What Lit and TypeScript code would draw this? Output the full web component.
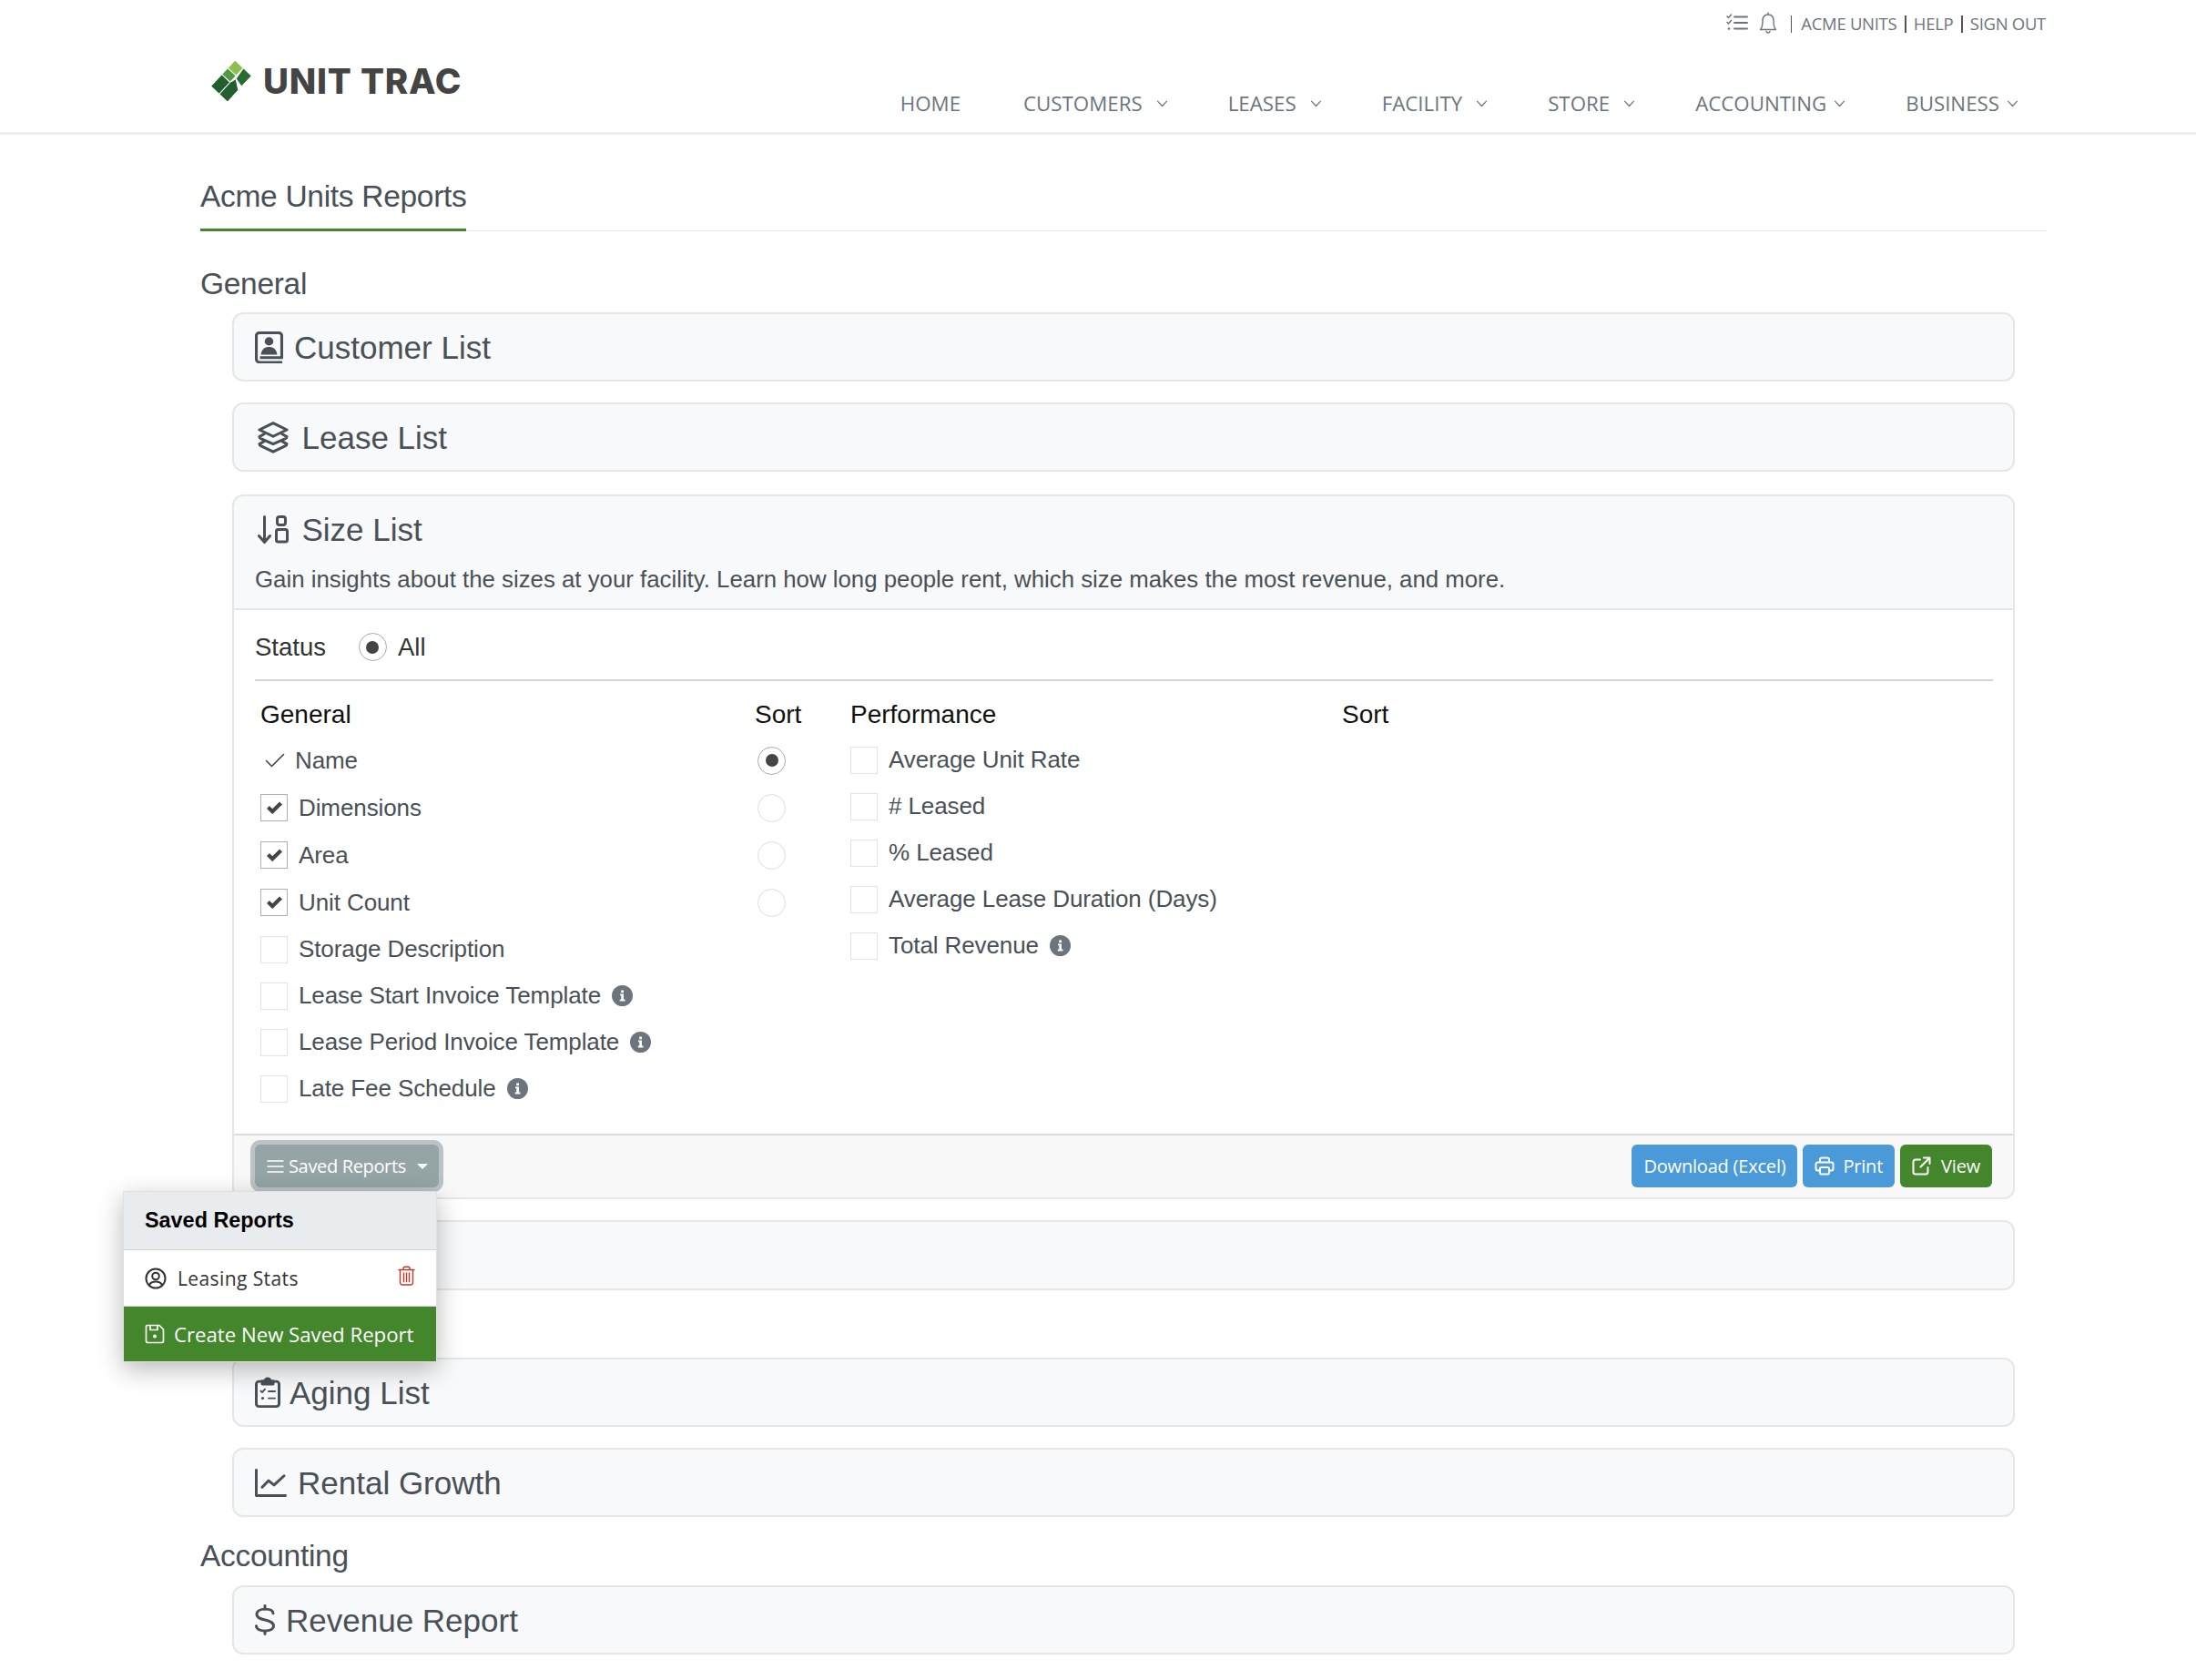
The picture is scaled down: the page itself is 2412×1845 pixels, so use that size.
import { LitElement, html, svg, css } from 'lit';
import { customElement } from 'lit/decorators.js';

const stroke = (w: number, h: number, vb: string, body: unknown, sw = 1.5) => html`<svg
    width=${w} height=${h} viewBox=${vb} fill="none" stroke="currentColor" stroke-width=${sw}
    stroke-linecap="round" stroke-linejoin="round">${body}</svg>`;

const icons = {
    customer: html`<svg width="31" height="35" viewBox="0 0 31 37" preserveAspectRatio="none" fill="none" stroke="currentColor" stroke-width="3.2" stroke-linejoin="round">
        <path d="M30 36H5.5A4 4 0 0 1 1.5 32V5A3.5 3.5 0 0 1 5 1.5H26A3.5 3.5 0 0 1 29.5 5V30.5H5.5"/>
        <circle cx="15.5" cy="11.5" r="4.8" fill="currentColor" stroke="none"/>
        <path d="M6.5 27C7.5 20 11 18 15.5 18S23.5 20 24.5 27Z" fill="currentColor" stroke="none"/></svg>`,
    layers: html`<svg width="34" height="35" viewBox="0 0 34 37" preserveAspectRatio="none" fill="none" stroke="currentColor" stroke-width="3.2" stroke-linejoin="round" stroke-linecap="round">
        <path d="M17 1.8L32 9.5L17 17.2L2 9.5Z"/>
        <path d="M7 14.5L2 17.5C2 19 3 19.5 4 20L17 26L30 20C31 19.5 32 19 32 17.5L27 14.5"/>
        <path d="M7 23L2 26C2 27.5 3 28 4 28.5L17 35L30 28.5C31 28 32 27.5 32 26L27 23"/></svg>`,
    sort: html`<svg width="34" height="31" viewBox="0 0 34 31" fill="none" stroke="currentColor" stroke-width="3" stroke-linejoin="round" stroke-linecap="round">
        <path d="M7.5 1.5V29M1.5 22.5L7.5 29.5L13.5 22.5"/>
        <rect x="21.5" y="1.5" width="9" height="9" rx="2.5"/>
        <rect x="20.5" y="15.5" width="12" height="13.5" rx="2"/></svg>`,
    clipboard: html`<svg class="clip" width="28" height="34" viewBox="0 0 28 36" preserveAspectRatio="none" fill="none" stroke="currentColor" stroke-width="3" stroke-linejoin="round" stroke-linecap="round">
        <path d="M8 5.5H4.5A3 3 0 0 0 1.5 8.5V31.5A3 3 0 0 0 4.5 34.5H23.5A3 3 0 0 0 26.5 31.5V8.5A3 3 0 0 0 23.5 5.5H20"/>
        <path d="M8 8.5V5H11A3 3 0 0 1 17 5H20V8.5Z" fill="currentColor"/>
        <path d="M6.5 16.5L8 18L11 14.5M15 17H22M15 25H22" stroke-width="2"/>
        <circle cx="8.5" cy="25" r="1.6" fill="currentColor" stroke="none"/></svg>`,
    graph: html`<svg width="35" height="31" viewBox="0 0 35 32" preserveAspectRatio="none" fill="none" stroke="currentColor" stroke-width="3" stroke-linejoin="round" stroke-linecap="round">
        <path d="M1.5 1.5V30.5H33.5"/><path d="M8 21L15 13.5L21 18.5L32 8"/></svg>`,
    dollar: html`<svg width="22" height="34" viewBox="0 0 22 36" preserveAspectRatio="none" fill="none" stroke="currentColor" stroke-width="3" stroke-linecap="round" stroke-linejoin="round">
        <path d="M20 10.5C20 7 16 5.5 11 5.5C6 5.5 2 7.5 2 11.5C2 15.5 6 16.8 11 18C16 19.2 20.5 20.5 20.5 25C20.5 29 16 30.8 11 30.8C6 30.8 1.5 29 1.5 25"/>
        <path d="M11 1.5V5.5M11 30.8V34.5"/></svg>`,
    listCheck: stroke(24, 20, '0 0 24 20', svg`<path d="M9 3.5H23M9 10H23M9 16.5H23" stroke-width="2"/><path d="M1 3L2.5 4.5L5.5 1M1 9.5L2.5 11L5.5 7.5" stroke-width="1.5"/><circle cx="3" cy="16.5" r="1.3" fill="currentColor" stroke="none"/>`),
    bell: stroke(20, 25, '0 0 20 25', svg`<path d="M10 1V3M10 3C5.5 3 4 6.5 4 10C4 15 3.5 17.5 1.5 19.5H18.5C16.5 17.5 16 15 16 10C16 6.5 14.5 3 10 3ZM8 21.5C8.5 23.5 11.5 23.5 12 21.5" stroke-width="1.4"/>`),
    chevron: stroke(13, 8, '0 0 13 8', svg`<path d="M1.5 1.2L6.5 6.5L11.5 1.2" stroke-width="1.2"/>`),
    list: stroke(19, 16, '0 0 19 16', svg`<path d="M1 2H18M1 8H18M1 14H18" stroke-width="1.5"/>`),
    printer: stroke(22, 21, '0 0 22 21', svg`<path d="M6 6.5V3.5A2 2 0 0 1 8 1.5H14A2 2 0 0 1 16 3.5V6.5M6 15.5H3.5A2 2 0 0 1 1.5 13.5V8.5A2 2 0 0 1 3.5 6.5H18.5A2 2 0 0 1 20.5 8.5V13.5A2 2 0 0 1 18.5 15.5H16"/><rect x="6" y="12" width="10" height="7.5" rx="1.5"/>`, 2),
    external: stroke(21, 21, '0 0 21 21', svg`<path d="M9 3.5H4A2.5 2.5 0 0 0 1.5 6V17A2.5 2.5 0 0 0 4 19.5H15A2.5 2.5 0 0 0 17.5 17V12"/><path d="M9.5 11.5L19 2M13 1.5H19.5V8"/>`, 2),
    person: stroke(24, 24, '0 0 24 24', svg`<circle cx="12" cy="12" r="10.5"/><circle cx="12" cy="9.5" r="3.8"/><path d="M5 19C6.5 16 9 15.5 12 15.5S17.5 16 19 19"/>`, 2),
    trash: stroke(19, 22, '0 0 19 22', svg`<path d="M1 4.5H18M6 4.5V3A1.8 1.8 0 0 1 7.8 1.2H11.2A1.8 1.8 0 0 1 13 3V4.5M2.5 4.5V18.5A2.5 2.5 0 0 0 5 21H14A2.5 2.5 0 0 0 16.5 18.5V4.5M6.5 8V17.5M9.5 8V17.5M12.5 8V17.5" stroke-width="1.4"/>`),
    save: stroke(22, 22, '0 0 22 22', svg`<path d="M3 1.5H16L20.5 6V18.5A2 2 0 0 1 18.5 20.5H3.5A2 2 0 0 1 1.5 18.5V3A1.5 1.5 0 0 1 3 1.5Z"/><path d="M6 1.5V6.5H14V1.5"/><circle cx="11" cy="13.5" r="2" fill="currentColor" stroke="none"/>`, 1.7),
    check: html`<svg width="17" height="14" viewBox="0 0 17 14" fill="none" stroke="currentColor" stroke-width="4.2"><path d="M1.5 6.5L6.2 11.2L15.5 2"/></svg>`,
    thinCheck: stroke(22, 16, '0 0 22 16', svg`<path d="M1.5 8.5L7.5 14.5L20.5 1.5" stroke-width="1.6"/>`),
    info: html`<svg class="info" width="23" height="23" viewBox="0 0 23 23"><circle cx="11.5" cy="11.5" r="11.5" fill="#6c757d"/><path d="M9 9.5H13V15.5H14.5V17.5H8.8V15.5H10.3V11.3H9ZM10.2 5.5H13V8.2H10.2Z" fill="#fff"/></svg>`
};

const navItems = [
    { label: 'HOME', caret: false, tight: false },
    { label: 'CUSTOMERS', caret: true, tight: false },
    { label: 'LEASES', caret: true, tight: false },
    { label: 'FACILITY', caret: true, tight: false },
    { label: 'STORE', caret: true, tight: false },
    { label: 'ACCOUNTING', caret: true, tight: true },
    { label: 'BUSINESS', caret: true, tight: true }
];

const generalRows = [
    { label: 'Dimensions', checked: true, info: false },
    { label: 'Area', checked: true, info: false },
    { label: 'Unit Count', checked: true, info: false }
];

const moreRows = [
    { label: 'Storage Description', info: false },
    { label: 'Lease Start Invoice Template', info: true },
    { label: 'Lease Period Invoice Template', info: true },
    { label: 'Late Fee Schedule', info: true }
];

const perfRows = [
    { label: 'Average Unit Rate', info: false },
    { label: '# Leased', info: false },
    { label: '% Leased', info: false },
    { label: 'Average Lease Duration (Days)', info: false },
    { label: 'Total Revenue', info: true }
];

@customElement('app-root')
export class AppRoot extends LitElement {
    static styles = css`
        :host {
            display: block;
            font-family: "Liberation Sans", Arial, sans-serif;
            color: #495057;
            background: #fff;
            min-height: 1845px;
            overflow: hidden;
        }
        header {
            height: 145px;
            border-bottom: 3px solid #eee;
            position: relative;
            font-family: "Open Sans", sans-serif;
            color: #6c757d;
        }
        .top-links {
            display: flex;
            justify-content: flex-end;
            align-items: center;
            height: 50px;
            padding-right: 165px;
            font-size: 18.5px;
            letter-spacing: -0.3px;
            color: #6c757d;
        }
        .top-links svg { margin-right: 12px; }
        .top-links span + span::before {
            content: '';
            display: inline-block;
            width: 1.5px;
            height: 19px;
            background: #555;
            margin: 0 8px 0 9px;
            vertical-align: -3px;
        }
        .top-links .first::before {
            content: '';
            display: inline-block;
            width: 1.5px;
            height: 19px;
            background: #555;
            margin: 0 10px 0 3px;
            vertical-align: -3px;
        }
        .logo {
            position: absolute;
            left: 231px;
            top: 66px;
            display: flex;
            align-items: center;
            gap: 12px;
            font-family: Inter, sans-serif;
            font-weight: 800;
            font-size: 38.5px;
            letter-spacing: 0.8px;
            color: #444;
        }
        nav {
            display: flex;
            justify-content: flex-end;
            gap: 66px;
            padding-right: 195px;
            margin-top: 49px;
            font-size: 22.3px;
            line-height: 30px;
        }
        nav a { display: flex; align-items: center; }
        nav a svg { margin-left: 15px; }
        nav a.tight svg { margin-left: 8px; }
        nav a:first-child { margin-right: 3px; }
        main { padding: 0 164px 0 220px; }
        .tabs {
            margin-top: 23px;
            height: 83px;
            border-bottom: 1px solid #e8e8e8;
            box-sizing: border-box;
        }
        .tabs .tab {
            display: inline-block;
            height: 83px;
            box-sizing: border-box;
            padding-top: 25px;
            border-bottom: 3px solid #43862b;
            font-size: 33.5px;
            line-height: 40px;
            letter-spacing: -0.3px;
        }
        .section-title {
            font-size: 33.5px;
            line-height: 38px;
            height: 51px;
            letter-spacing: -0.3px;
        }
        .section-title.first { margin-top: 39px; height: 50px; }
        .section-title.later { margin-top: 24px; }
        .section-title.hidden { height: 50px; }
        .cards { margin: 0 35px; }
        .card {
            border: 2px solid #e6e6e6;
            border-radius: 12px;
            background: #f8f9fa;
            margin-bottom: 23px;
        }
        .cards > .card:last-child { margin-bottom: 0; }
        .card.size { margin-top: 25px; }
        .card-title {
            display: flex;
            align-items: center;
            height: 72px;
            padding-left: 23px;
            font-size: 35px;
            gap: 12px;
        }
        .card-title span { position: relative; top: 1px; }
        .card-title svg.clip { margin-right: -2px; }
        .title-lg .card-title { padding-left: 26px; gap: 14.5px; }
        .desc {
            box-sizing: border-box;
            padding: 2px 0 0 23px;
            height: 53px;
            font-size: 25.8px;
            line-height: 34px;
            border-bottom: 2px solid #e6e6e6;
        }
        .panel { background: #fff; padding: 0 22px 0 23px; }
        .status {
            display: flex;
            align-items: center;
            box-sizing: border-box;
            height: 78px;
            padding-top: 5px;
            border-bottom: 2px solid #d5d5d5;
            font-size: 27.5px;
            color: #333;
        }
        .status .radio { margin: 0 12px 0 36px; }
        .radio {
            width: 31px;
            height: 31px;
            border: 1px solid #dedede;
            border-radius: 50%;
            background: #fff;
            display: inline-flex;
            align-items: center;
            justify-content: center;
            box-sizing: border-box;
        }
        .radio.on { border-color: #aaa; }
        .radio.on::after {
            content: '';
            width: 14px;
            height: 14px;
            border-radius: 50%;
            background: #444;
        }
        .fields {
            display: grid;
            grid-template-columns: 543px 105px 540px 105px;
            padding: 16px 0 24px 6px;
        }
        .col-head {
            height: 45px;
            line-height: 42px;
            font-size: 28px;
            color: #111;
        }
        .row {
            display: flex;
            align-items: center;
            height: 51px;
            font-size: 26px;
            letter-spacing: -0.1px;
        }
        .row.tall { height: 52px; }
        .box {
            width: 30px;
            height: 30px;
            box-sizing: border-box;
            border: 1px solid #e2e2e2;
            margin-right: 12px;
            display: inline-flex;
            align-items: center;
            justify-content: center;
            color: #444;
            background: #fff;
        }
        .box.on { border-color: #b0b0b0; }
        .tick { width: 38px; display: inline-flex; padding-left: 5px; box-sizing: border-box; color: #444; }
        .info { margin-left: 12px; }
        .sort-cell { padding-left: 3px; box-sizing: border-box; }
        .footer {
            position: relative;
            display: flex;
            justify-content: space-between;
            align-items: center;
            height: 67px;
            padding: 0 23px 1px;
            background: #f8f8f8;
            border-top: 2px solid #dcdcdc;
            border-radius: 0 0 12px 12px;
            font-family: "Open Sans", sans-serif;
            font-size: 20px;
        }
        .btn {
            display: inline-flex;
            align-items: center;
            height: 47px;
            padding: 0 13px;
            border-radius: 6px;
            color: #fff;
            gap: 11px;
            background: #4a9ad9;
            letter-spacing: -0.2px;
        }
        .btn.print { gap: 9px; }
        .btn.green { background: #43862b; }
        .btn.saved {
            background: #95a5a6;
            box-shadow: 0 0 0 5px #bcc3c7;
            gap: 5px;
            padding: 0 12px 0 13px;
            letter-spacing: -0.35px;
        }
        .btn.saved::after {
            content: '';
            border: 6px solid transparent;
            border-top-color: #fff;
            border-bottom: 0;
            margin-left: 7px;
        }
        .actions { display: flex; gap: 6px; }
        .menu {
            position: absolute;
            left: -122px;
            top: 61px;
            width: 345px;
            background: #fff;
            border: 1px solid #e0e0e0;
            box-sizing: border-box;
            box-shadow: 0 8px 26px rgba(0, 0, 0, 0.28);
            z-index: 5;
            font-size: 21px;
            color: #333;
        }
        .menu-head {
            height: 63px;
            padding-left: 23px;
            display: flex;
            align-items: center;
            background: #e9ecef;
            border-bottom: 1px solid #d5d5d5;
            font-family: "Liberation Sans", Arial, sans-serif;
            font-weight: 700;
            font-size: 23.4px;
            color: #000;
        }
        .menu-item {
            height: 62px;
            padding: 0 23px 0 23px;
            display: flex;
            align-items: center;
            gap: 12px;
            box-sizing: border-box;
            border-bottom: 1px solid #d5d5d5;
            letter-spacing: 0.4px;
        }
        .menu-item .trash { margin-left: auto; color: #c0392b; display: flex; margin-top: -6px; }
        .menu-create {
            height: 60px;
            padding-left: 23px;
            display: flex;
            align-items: center;
            gap: 10px;
            background: #43862b;
            color: #fff;
            font-size: 22.2px;
        }
        .spacer { height: 73px; }
    `;

    private titleCard(icon: unknown, label: string, large = false) {
        return html`<div class="card ${large ? 'title-lg' : ''}"><div class="card-title">${icon}<span>${label}</span></div></div>`;
    }

    private renderNav() {
        return html`<nav>
            ${navItems.map(n => html`<a class=${n.tight ? 'tight' : ''}>${n.label}${n.caret ? icons.chevron : null}</a>`)}
        </nav>`;
    }

    private renderFields() {
        return html`<div class="fields">
            <div>
                <div class="col-head">General</div>
                <div class="row tall"><span class="tick">${icons.thinCheck}</span>Name</div>
                ${generalRows.map(r => html`<div class="row tall"><span class="box on">${icons.check}</span>${r.label}</div>`)}
                ${moreRows.map(r => html`<div class="row"><span class="box"></span>${r.label}${r.info ? icons.info : null}</div>`)}
            </div>
            <div>
                <div class="col-head">Sort</div>
                <div class="row tall sort-cell"><span class="radio on"></span></div>
                ${generalRows.map(() => html`<div class="row tall sort-cell"><span class="radio"></span></div>`)}
            </div>
            <div>
                <div class="col-head">Performance</div>
                ${perfRows.map(r => html`<div class="row"><span class="box"></span>${r.label}${r.info ? icons.info : null}</div>`)}
            </div>
            <div><div class="col-head">Sort</div></div>
        </div>`;
    }

    private renderSizeCard() {
        return html`<div class="card size title-lg">
            <div class="card-title">${icons.sort}<span>Size List</span></div>
            <div class="desc">Gain insights about the sizes at your facility. Learn how long people rent, which size makes the most revenue, and more.</div>
            <div class="panel">
                <div class="status">Status<span class="radio on"></span>All</div>
                ${this.renderFields()}
            </div>
            <div class="footer">
                <span class="btn saved">${icons.list}Saved Reports</span>
                <div class="actions">
                    <span class="btn">Download (Excel)</span>
                    <span class="btn print">${icons.printer}Print</span>
                    <span class="btn green">${icons.external}View</span>
                </div>
                <div class="menu">
                    <div class="menu-head">Saved Reports</div>
                    <div class="menu-item">${icons.person}<span>Leasing Stats</span><span class="trash">${icons.trash}</span></div>
                    <div class="menu-create">${icons.save}<span>Create New Saved Report</span></div>
                </div>
            </div>
        </div>`;
    }

    render() {
        return html`
            <header>
                <div class="top-links">
                    ${icons.listCheck}${icons.bell}
                    <span class="first">ACME UNITS</span><span>HELP</span><span>SIGN OUT</span>
                </div>
                <div class="logo">
                    <svg width="46" height="46" viewBox="0 0 44 45" stroke="#fff" stroke-width="1">
                        <polygon points="26,0 35,8.5 27.2,16.9 18.2,8.4" fill="#8cc04b"/>
                        <polygon points="18.2,8.4 27.2,16.9 20.7,23.9 11.7,15.4" fill="#4f9a44"/>
                        <polygon points="35,8.5 44,17 33,28.5 27,20" fill="#2a6b35"/>
                        <polygon points="11.7,15.4 20.7,23.9 27,20 29.7,32.4 18,45 0,28" fill="#235f2e"/>
                        <path d="M20.7 23.9L9 36.5" fill="none"/>
                    </svg>
                    <span>UNIT TRAC</span>
                </div>
                ${this.renderNav()}
            </header>
            <main>
                <div class="tabs"><span class="tab">Acme Units Reports</span></div>
                <div class="section-title first">General</div>
                <div class="cards">
                    ${this.titleCard(icons.customer, 'Customer List')}
                    ${this.titleCard(icons.layers, 'Lease List', true)}
                    ${this.renderSizeCard()}
                    <div class="card"><div class="spacer"></div></div>
                </div>
                <div class="section-title later hidden"></div>
                <div class="cards">
                    ${this.titleCard(icons.clipboard, 'Aging List')}
                    ${this.titleCard(icons.graph, 'Rental Growth')}
                </div>
                <div class="section-title later">Accounting</div>
                <div class="cards">
                    ${this.titleCard(icons.dollar, 'Revenue Report')}
                </div>
            </main>
        `;
    }
}
